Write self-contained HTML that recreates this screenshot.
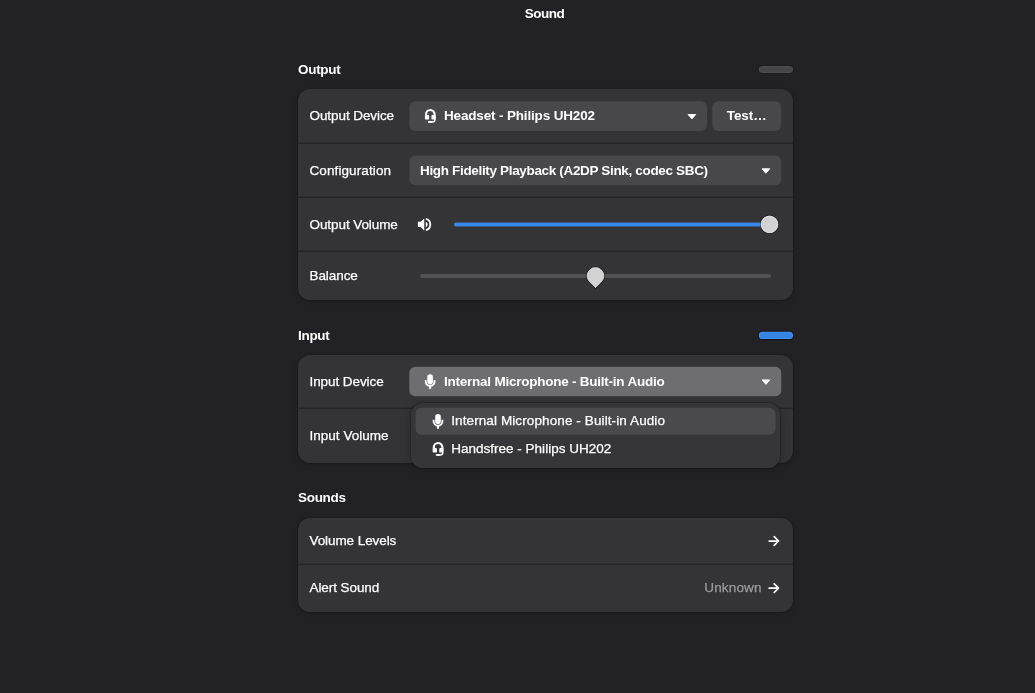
<!DOCTYPE html>
<html><head><meta charset="utf-8"><title>Sound</title>
<style>
*{box-sizing:border-box;margin:0;padding:0}
html,body{width:1035px;height:693px;overflow:hidden;background:#222226;color:#fff;font-family:"Liberation Sans",sans-serif;font-size:13.5px}
#root{position:absolute;left:0;top:0;width:1035px;height:693px;will-change:transform}
.card{position:absolute;left:298px;width:495px;background:#343437;border-radius:12px;box-shadow:0 0 0 1px rgba(0,0,6,.1),0 1px 3px 1px rgba(0,0,6,.13),0 2px 6px 2px rgba(0,0,6,.04)}
.sep{position:absolute;left:298px;width:495px;height:1px;background:#252528;box-shadow:0 -1px 0 rgba(0,0,6,.1)}
.lbl,.b,.h,.title{position:absolute;font-size:13.5px;line-height:16px;white-space:nowrap}
.lbl{-webkit-text-stroke:.25px currentColor;letter-spacing:-.08px}
.b,.h,.title{font-weight:bold}
.ov{position:absolute;left:0;top:0;overflow:visible}
.pop{position:absolute;left:411px;top:403px;width:369px;height:65px;background:#36363a;border-radius:12px;box-shadow:0 0 0 1px rgba(0,0,6,.14),0 1px 4px 1px rgba(0,0,6,.16),0 2px 12px 3px rgba(0,0,6,.05)}
.dim{color:#9b9b9d}
</style></head><body>
<div id="root">
<div class="card" style="top:89px;height:211px"></div>
<div class="card" style="top:355px;height:108px"></div>
<div class="card" style="top:518px;height:93.5px"></div>
<div class="sep" style="top:143px"></div>
<div class="sep" style="top:197px"></div>
<div class="sep" style="top:251px"></div>
<div class="sep" style="top:408px"></div>
<div class="sep" style="top:564px"></div>
<svg class="ov" width="1035" height="693" viewBox="0 0 1035 693">
<rect x="409.4" y="101.2" width="297.6" height="29.7" rx="6" fill="#48484b"/>
<rect x="712.3" y="101.2" width="68.9" height="29.7" rx="6" fill="#48484b"/>
<rect x="409.4" y="155.6" width="371.8" height="29.6" rx="6" fill="#48484b"/>
<rect x="409.3" y="366.7" width="372" height="29.5" rx="6" fill="#6e6e70"/>
<g transform="translate(422.3 108)"><path d="M3.75 10.5V6.25a4.25 4.25 0 0 1 8.5 0V10.5" fill="none" stroke="#fff" stroke-width="2.2"/><rect x="2.65" y="7" width="4.2" height="4.6" rx=".9" fill="#fff"/><rect x="9.15" y="7" width="4.2" height="4.6" rx=".9" fill="#fff"/><path d="M12.6 11v.8c0 1.400-1 2.100-2.400 2.100H7" fill="none" stroke="#fff" stroke-width="1.5"/><rect x="5.6" y="13" width="4.4" height="1.800" rx=".9" fill="#fff"/></g>
<g transform="translate(686.9 113.9)"><path d="M1.200 .6h7.600L5 5z" fill="#fff" stroke="#fff" stroke-width="1" stroke-linejoin="round"/></g>
<g transform="translate(760.9 168.25)"><path d="M1.200 .6h7.600L5 5z" fill="#fff" stroke="#fff" stroke-width="1" stroke-linejoin="round"/></g>
<g transform="translate(760.9 379.35)"><path d="M1.200 .6h7.600L5 5z" fill="#fff" stroke="#fff" stroke-width="1" stroke-linejoin="round"/></g>
<g transform="translate(416 216.7)"><path d="M1.9 5h2.700L8.250 1.700v12.100L4.600 10.200H1.900z" fill="#fff"/><path d="M9.800 4.900Q13.600 7.850 9.800 10.800z" fill="#fff"/><path d="M9.900 2.050A5.830 5.830 0 0 1 9.900 13.350" fill="none" stroke="#fff" stroke-width="1.800"/></g>
<g transform="translate(422.1 373.6)"><rect x="5.2" y=".6" width="5.6" height="10" rx="2.8" fill="#fff"/><path d="M3.6 6.300v1.500a4.400 4.400 0 0 0 8.800 0v-1.500" fill="none" stroke="#fff" stroke-width="1.900"/><path d="M8 12.300v3" fill="none" stroke="#fff" stroke-width="2"/></g>
<rect x="453" y="221.5" width="319" height="6" rx="3" fill="#3a2f2a"/>
<rect x="454" y="222.6" width="317" height="3.8" rx="1.9" fill="#3687ea"/>
<circle cx="769.5" cy="224.400" r="9.400" fill="rgba(0,0,6,.45)"/><circle cx="769.5" cy="224.400" r="8.650" fill="#d2d2d2"/><circle cx="769.5" cy="224.400" r="8.250" fill="none" stroke="#e6e6e6" stroke-width=".8"/>
<rect x="420" y="274" width="351" height="4" rx="2" fill="#525255"/>
<path d="M595.50 289.19 588.85 282.55A9.40 9.40 0 1 1 602.15 282.55z" fill="rgba(0,0,6,.6)"/><path d="M595.50 287.71 589.60 281.80A8.35 8.35 0 1 1 601.40 281.80z" fill="#d2d2d2" stroke="#e6e6e6" stroke-width=".7"/>
<rect x="758" y="65" width="36" height="9" rx="4.5" fill="rgba(0,0,6,.2)"/>
<rect x="758.8" y="65.9" width="34.2" height="7.2" rx="3.6" fill="#4d4d51"/>
<rect x="759.8" y="66.9" width="32.2" height="5.2" rx="2.6" fill="#46464a"/>
<rect x="758" y="331" width="36" height="9" rx="4.5" fill="#1a0f08"/>
<rect x="758.8" y="331.8" width="34.2" height="7.2" rx="3.6" fill="#3d93fb"/>
<rect x="759.8" y="332.8" width="32.2" height="5.2" rx="2.6" fill="#3584e4"/>
<g transform="translate(768 535)"><path d="M1.200 6h9.200M6.200 1.700 10.500 6 6.200 10.300" fill="none" stroke="#fff" stroke-width="1.750" stroke-linecap="round" stroke-linejoin="round"/></g>
<g transform="translate(768 582.2)"><path d="M1.200 6h9.200M6.200 1.700 10.500 6 6.200 10.300" fill="none" stroke="#fff" stroke-width="1.750" stroke-linecap="round" stroke-linejoin="round"/></g>
</svg>
<div class="title" style="left:0;width:1089px;text-align:center;top:6px;letter-spacing:-.45px">Sound</div>
<div class="h" style="top:62px;left:298px;letter-spacing:-0.3px;">Output</div>
<div class="h" style="top:328px;left:298px;letter-spacing:-0.3px;">Input</div>
<div class="h" style="top:490px;left:298px;letter-spacing:-0.3px;">Sounds</div>
<div class="lbl" style="top:108px;left:309.5px;">Output Device</div>
<div class="lbl" style="top:163px;left:309.5px;letter-spacing:0.1px;">Configuration</div>
<div class="lbl" style="top:217px;left:309.5px;">Output Volume</div>
<div class="lbl" style="top:268px;left:309.5px;">Balance</div>
<div class="lbl" style="top:374px;left:309.5px;">Input Device</div>
<div class="lbl" style="top:428px;left:309.5px;letter-spacing:0.02px;">Input Volume</div>
<div class="lbl" style="top:533px;left:309.5px;">Volume Levels</div>
<div class="lbl" style="top:580px;left:309.5px;">Alert Sound</div>
<div class="lbl dim" style="top:580px;right:273.4px;letter-spacing:0.15px;">Unknown</div>
<div class="b" style="top:108px;left:444px;letter-spacing:-0.16px;">Headset - Philips UH202</div>
<div class="b" style="top:108px;left:726.8px;letter-spacing:-0.1px;">Test…</div>
<div class="b" style="top:163px;left:420px;letter-spacing:-0.335px;">High Fidelity Playback (A2DP Sink, codec SBC)</div>
<div class="b" style="top:374px;left:444px;letter-spacing:-0.237px;">Internal Microphone - Built-in Audio</div>
<div class="pop"></div>
<svg class="ov" width="1035" height="693" viewBox="0 0 1035 693">
<rect x="415.6" y="407.8" width="359.9" height="27" rx="6" fill="#4a4a4e"/>
<g transform="translate(430 413.5)"><rect x="5.2" y=".6" width="5.6" height="10" rx="2.8" fill="#fff"/><path d="M3.6 6.300v1.500a4.400 4.400 0 0 0 8.800 0v-1.500" fill="none" stroke="#fff" stroke-width="1.900"/><path d="M8 12.300v3" fill="none" stroke="#fff" stroke-width="2"/></g>
<g transform="translate(430.1 441)"><path d="M3.75 10.5V6.25a4.25 4.25 0 0 1 8.5 0V10.5" fill="none" stroke="#fff" stroke-width="2.2"/><rect x="2.65" y="7" width="4.2" height="4.6" rx=".9" fill="#fff"/><rect x="9.15" y="7" width="4.2" height="4.6" rx=".9" fill="#fff"/><path d="M12.6 11v.8c0 1.400-1 2.100-2.400 2.100H7" fill="none" stroke="#fff" stroke-width="1.5"/><rect x="5.6" y="13" width="4.4" height="1.800" rx=".9" fill="#fff"/></g>
</svg>
<div class="lbl" style="top:413px;left:451.2px;letter-spacing:0.105px;">Internal Microphone - Built-in Audio</div>
<div class="lbl" style="top:441px;left:451.2px;letter-spacing:0.01px;">Handsfree - Philips UH202</div>
</div>
</body></html>
